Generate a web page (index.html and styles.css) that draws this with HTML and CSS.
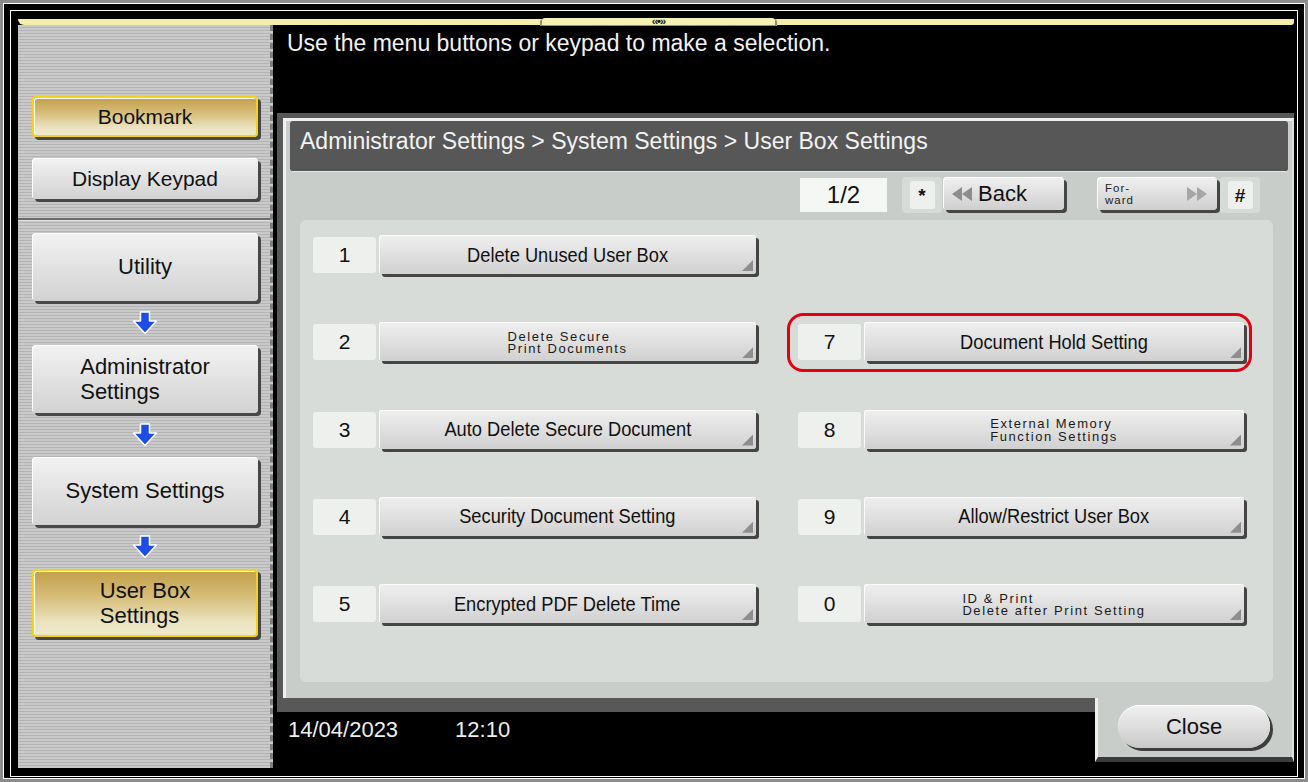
FILE: index.html
```html
<!DOCTYPE html>
<html>
<head>
<meta charset="utf-8">
<title>User Box Settings</title>
<link rel="stylesheet" href="styles.css">
</head>
<body>
<div class="device">
  <div class="screen">
    <div class="topbar"><div class="tab">‹‹•››</div></div>
    <div class="body">
      <aside class="sidebar">
        <div class="side-top">
          <div class="side-btn short yellow">Bookmark</div>
          <div class="side-btn short">Display Keypad</div>
        </div>
        <div class="side-bottom">
          <div class="side-btn tall">Utility</div>
          <svg class="arrow" viewBox="0 0 26 24" width="26" height="24"><path d="M8.5 1H17.5V10H24.5L13 22.5L1.5 10H8.5Z" fill="#1d4de6" stroke="#fff" stroke-width="1.5" stroke-linejoin="round"/></svg>
          <div class="side-btn tall"><span class="lines">Administrator<br>Settings</span></div>
          <svg class="arrow" viewBox="0 0 26 24" width="26" height="24"><path d="M8.5 1H17.5V10H24.5L13 22.5L1.5 10H8.5Z" fill="#1d4de6" stroke="#fff" stroke-width="1.5" stroke-linejoin="round"/></svg>
          <div class="side-btn tall">System Settings</div>
          <svg class="arrow" viewBox="0 0 26 24" width="26" height="24"><path d="M8.5 1H17.5V10H24.5L13 22.5L1.5 10H8.5Z" fill="#1d4de6" stroke="#fff" stroke-width="1.5" stroke-linejoin="round"/></svg>
          <div class="side-btn tall yellow"><span class="lines">User Box<br>Settings</span></div>
        </div>
      </aside>
      <main class="main">
        <div class="message">Use the menu buttons or keypad to make a selection.</div>
        <div class="panel">
          <div class="panel-frame">
            <div class="panel-body">
              <div class="crumb">Administrator Settings &gt; System Settings &gt; User Box Settings</div>
              <div class="pager">
                <div class="page-box">1/2</div>
                <div class="key"><div class="key-cap">*</div></div>
                <div class="nav-btn back">
                  <svg width="20" height="14" viewBox="0 0 20 14"><path d="M10 0V14L0 7Z M20 0V14L10 7Z" fill="#8d8d8d"/></svg>
                  <span class="nav-lbl">Back</span>
                </div>
                <div class="nav-btn fwd">
                  <span class="fwd-lbl">For-<br>ward</span>
                  <svg width="20" height="14" viewBox="0 0 20 14"><path d="M0 0V14L10 7Z M10 0V14L20 7Z" fill="#a6a6a6"/></svg>
                </div>
                <div class="key hash"><div class="key-cap">#</div></div>
              </div>
              <div class="menu">
                <div class="item"><div class="num">1</div><div class="mbtn"><span class="lbl">Delete Unused User Box</span></div></div>
                <div class="item empty"></div>
                <div class="item"><div class="num">2</div><div class="mbtn"><span class="lbl small">Delete Secure<br>Print Documents</span></div></div>
                <div class="item hl"><div class="num">7</div><div class="mbtn"><span class="lbl">Document Hold Setting</span></div></div>
                <div class="item"><div class="num">3</div><div class="mbtn"><span class="lbl">Auto Delete Secure Document</span></div></div>
                <div class="item"><div class="num">8</div><div class="mbtn"><span class="lbl small">External Memory<br>Function Settings</span></div></div>
                <div class="item"><div class="num">4</div><div class="mbtn"><span class="lbl">Security Document Setting</span></div></div>
                <div class="item"><div class="num">9</div><div class="mbtn"><span class="lbl">Allow/Restrict User Box</span></div></div>
                <div class="item"><div class="num">5</div><div class="mbtn"><span class="lbl">Encrypted PDF Delete Time</span></div></div>
                <div class="item"><div class="num">0</div><div class="mbtn"><span class="lbl small">ID &amp; Print<br>Delete after Print Setting</span></div></div>
              </div>
            </div>
          </div>
          <div class="panel-foot">
            <div class="clock"><span>14/04/2023</span><span class="time">12:10</span></div>
            <div class="close-tab"><div class="close-btn">Close</div></div>
          </div>
        </div>
      </main>
    </div>
  </div>
</div>
</body>
</html>
```

FILE: styles.css
```css
* { box-sizing: border-box; }
html, body { margin: 0; padding: 0; }
body {
  width: 1308px;
  height: 782px;
  padding: 3px;
  overflow: hidden;
  background: #8c8c8c;
  font-family: "Liberation Sans", Arial, sans-serif;
  color: #111;
}
.device {
  width: 1302px;
  height: 776px;
  border: 1px solid #fff;
  background: #000;
  padding: 6px 6px 1px 6px;
}
.screen {
  height: 100%;
  border: 1px solid #fff;
  padding: 7px 3px 0 7px;
  display: flex;
  flex-direction: column;
  background: #000;
}
.topbar {
  margin-top: 1px;
  height: 6px;
  flex: none;
  background: #f4efa8;
  border-radius: 0 0 3px 6px;
}
.tab {
  margin-left: 524px;
  margin-top: -1px;
  width: 233px;
  height: 7px;
  background: #f6f2b4;
  border-radius: 3px 3px 0 0;
  box-shadow: -2px 1px 0 #8f8f7a, 2px 1px 0 #8f8f7a;
  text-align: center;
  font-size: 11px;
  font-weight: bold;
  line-height: 6px;
  letter-spacing: -1px;
  color: #111;
}
.body {
  flex: 1;
  display: flex;
  min-height: 0;
}
.sidebar {
  width: 255px;
  height: 743px;
  flex: none;
  display: flex;
  flex-direction: column;
  background: repeating-linear-gradient(to bottom, #c9c9c9 0, #c9c9c9 2px, #b4b4b4 2px, #b4b4b4 3px);
  border-right: 3px dashed #7f7f7f;
}
.side-top {
  height: 193px;
  flex: none;
  padding: 71px 12px 0 14px;
  display: flex;
  flex-direction: column;
  gap: 21px;
}
.side-bottom {
  flex: 1;
  border-top: 2px solid #6b6b6b;
  box-shadow: inset 0 1px 0 #dedede;
  padding: 13px 12px 0 14px;
  display: flex;
  flex-direction: column;
  gap: 10px;
}
.side-btn {
  display: flex;
  align-items: center;
  justify-content: center;
  border-radius: 4px;
  background: linear-gradient(#f2f2f2, #e2e2e2 50%, #d2d2d2);
  box-shadow: 3px 3px 0 #474747, inset 1px 1px 0 #fff;
  color: #111;
  white-space: nowrap;
}
.side-btn.short { height: 41px; font-size: 21px; }
.side-btn.tall { height: 68px; font-size: 22px; }
.side-btn.yellow {
  border: 2px solid #f2d21b;
  background: linear-gradient(#c2a04a 0%, #d6bd78 40%, #ebe3c0 80%, #efe9cc 100%);
}
.lines {
  display: inline-block;
  text-align: left;
  line-height: 25px;
}
.arrow { align-self: center; flex: none; }
.main {
  flex: 1;
  display: flex;
  flex-direction: column;
  min-width: 0;
}
.message {
  height: 88px;
  flex: none;
  padding: 5px 0 0 14px;
  color: #f2f2f2;
  font-size: 23px;
  line-height: 26px;
  white-space: nowrap;
}
.panel {
  margin-left: 4px;
  display: flex;
  flex-direction: column;
}
.panel-frame {
  background: #585858;
  padding: 5px 0 0 6px;
}
.panel-body {
  border-top: 3px solid #eef1ee;
  border-left: 3px solid #eef1ee;
  border-right: 2px solid #dde1dd;
  background: #c9cdc9;
  display: flex;
  flex-direction: column;
}
.crumb {
  height: 51px;
  margin: 0 4px;
  background: #575757;
  border-radius: 3px;
  border-bottom: 1px solid #e4e6e4;
  color: #f3f3f3;
  font-size: 23px;
  line-height: 28px;
  padding: 6px 0 0 10px;
  white-space: nowrap;
}
.pager {
  display: flex;
  justify-content: flex-end;
  align-items: flex-start;
  margin-top: 5px;
  height: 36px;
  padding-right: 32px;
}
.page-box {
  width: 87px;
  height: 34px;
  margin-top: 1px;
  margin-right: 15px;
  background: #f5f7f5;
  font-size: 24px;
  line-height: 34px;
  text-align: center;
}
.key {
  width: 40px;
  height: 36px;
  background: #d7dbd7;
  border-radius: 4px;
  display: flex;
  align-items: center;
  justify-content: center;
}
.key.hash { margin-left: 3px; }
.key-cap {
  width: 25px;
  height: 28px;
  background: #eef0ee;
  border-radius: 3px;
  text-align: center;
  font-size: 19px;
  font-weight: bold;
  line-height: 29px;
}
.nav-btn {
  height: 33px;
  display: flex;
  align-items: center;
  border-radius: 4px;
  background: linear-gradient(#f0f0f0, #dedede 55%, #cfcfcf);
  box-shadow: 3px 3px 0 #454545, inset 1px 1px 0 #fff;
}
.nav-btn.back {
  width: 121px;
  margin-left: 1px;
  padding-left: 9px;
}
.nav-lbl {
  margin-left: 6px;
  font-size: 22px;
}
.nav-btn.fwd {
  width: 120px;
  margin-left: 33px;
  padding: 0 10px 0 8px;
  justify-content: space-between;
}
.fwd-lbl {
  font-size: 11.5px;
  line-height: 11.5px;
  letter-spacing: 1px;
  color: #222;
  margin-top: 2px;
}
.menu {
  height: 462px;
  margin: 7px 19px 16px 14px;
  background: #d8dcd8;
  border-radius: 6px;
  padding: 15px 0 0 13px;
  display: grid;
  grid-template-columns: 447px 450px;
  grid-template-rows: repeat(5, 44px);
  column-gap: 38px;
  row-gap: 43.25px;
}
.item {
  display: flex;
  gap: 3px;
  position: relative;
}
.item.hl::before {
  content: "";
  position: absolute;
  left: -11px;
  right: -4px;
  top: -9px;
  bottom: -6px;
  border: 3px solid #e3000f;
  border-radius: 16px;
}
.num {
  width: 63px;
  height: 36px;
  margin-top: 2px;
  flex: none;
  background: #eef0ee;
  border-radius: 3px;
  font-size: 21px;
  line-height: 36px;
  text-align: center;
}
.mbtn {
  flex: 1;
  margin-right: 4px;
  height: 39px;
  position: relative;
  display: flex;
  align-items: center;
  justify-content: center;
  border-radius: 3px;
  background: linear-gradient(#efefef, #e0e0e0 50%, #d0d0d0);
  box-shadow: 3px 3px 0 #454545, inset 1px 1px 0 #fafafa;
}
.mbtn::after {
  content: "";
  position: absolute;
  right: 3px;
  bottom: 3px;
  width: 11px;
  height: 11px;
  background: #8e8e8e;
  clip-path: polygon(100% 0, 100% 100%, 0 100%);
}
.lbl {
  display: inline-block;
  font-size: 21px;
  white-space: nowrap;
  transform: scaleX(0.87);
}
.lbl.small {
  transform: none;
  font-size: 13px;
  letter-spacing: 1.6px;
  line-height: 12.5px;
  text-align: left;
  margin-top: 3px;
  color: #1a1a1a;
}
.panel-foot {
  display: flex;
  height: 64px;
}
.clock {
  flex: 1;
  border-top: 14px solid #585858;
  background: #000;
  color: #eeeeee;
  font-size: 22px;
  line-height: 26px;
  padding: 5px 0 0 11px;
  display: flex;
}
.clock .time { margin-left: 57px; }
.close-tab {
  width: 199px;
  flex: none;
  background: #c9cdc9;
  border-left: 3px solid #eef1ee;
  border-right: 2px solid #dde1dd;
  border-bottom: 5px solid #3b3b3b;
  padding: 7px 0 0 20px;
}
.close-btn {
  width: 152px;
  height: 43px;
  border-radius: 22px;
  background: linear-gradient(#f0f0f0, #dcdcdc 55%, #c8c8c8);
  box-shadow: 3px 3px 0 #3e3e3e, inset 0 1px 0 #fff;
  display: flex;
  align-items: center;
  justify-content: center;
  font-size: 22px;
}
```
